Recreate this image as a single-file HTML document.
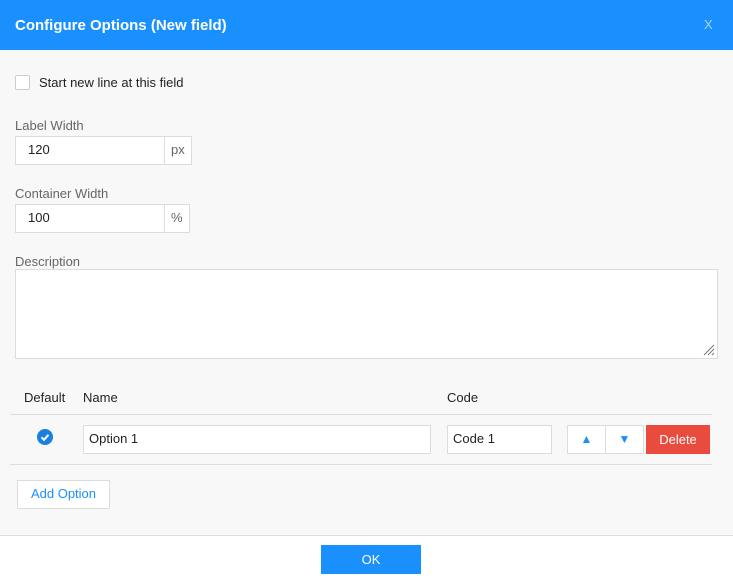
<!DOCTYPE html>
<html><head><style>
body{margin:0;width:733px;height:584px;background:#f8f8f8;font-family:"Liberation Sans",sans-serif;font-size:13px;color:#222;position:relative;overflow:hidden}
.a{position:absolute;box-sizing:border-box}
.hdr{left:0;top:0;width:733px;height:50px;background:#1a90ff;color:#fff}
.inp{background:#fff;border:1px solid #dcdcdc;line-height:26px;padding-left:12px;font-size:13px;color:#222}
.lbl{color:#666;font-size:13px}
</style></head><body>
<div class="a hdr"><div class="a" style="left:15px;top:17px;font-size:15px;font-weight:bold">Configure Options (New field)</div><div class="a" style="left:704px;top:17px;font-size:13px;color:#a8d3ff">X</div></div>
<div class="a" style="left:15px;top:75px;width:15px;height:15px;background:#fff;border:1px solid #ccc;border-radius:2px"></div>
<div class="a" style="left:39px;top:75px">Start new line at this field</div>
<div class="a lbl" style="left:15px;top:118px">Label Width</div>
<div class="a inp" style="left:15px;top:136px;width:150px;height:29px">120</div>
<div class="a inp" style="left:164px;top:136px;width:28px;height:29px;padding-left:6px;color:#666">px</div>
<div class="a lbl" style="left:15px;top:186px">Container Width</div>
<div class="a inp" style="left:15px;top:204px;width:150px;height:29px">100</div>
<div class="a inp" style="left:164px;top:204px;width:26px;height:29px;padding-left:6px;color:#666">%</div>
<div class="a lbl" style="left:15px;top:254px">Description</div>
<div class="a inp" style="left:15px;top:269px;width:703px;height:90px"></div>
<svg class="a" style="left:702px;top:343px" width="13" height="13"><path d="M12 2L2 12M12 6L6 12M12 10L10 12" stroke="#777" stroke-width="1"/></svg>
<div class="a" style="left:24px;top:390px">Default</div>
<div class="a" style="left:83px;top:390px">Name</div>
<div class="a" style="left:447px;top:390px">Code</div>
<div class="a" style="left:10px;top:414px;width:702px;height:1px;background:#ddd"></div>
<svg class="a" style="left:37px;top:429px" width="16" height="16"><circle cx="8" cy="8" r="8" fill="#1a7fe0"/><path d="M4.5 8.3L7 10.8L11.5 5.8" stroke="#fff" stroke-width="2" fill="none"/></svg>
<div class="a inp" style="left:83px;top:425px;width:348px;height:29px;padding-left:5px">Option 1</div>
<div class="a inp" style="left:447px;top:425px;width:105px;height:29px;padding-left:5px">Code 1</div>
<div class="a inp" style="left:567px;top:425px;width:39px;height:29px;padding:0;text-align:center;color:#1a90ff;font-size:12px">▲</div>
<div class="a inp" style="left:605px;top:425px;width:39px;height:29px;padding:0;text-align:center;color:#1a90ff;font-size:12px">▼</div>
<div class="a" style="left:646px;top:425px;width:64px;height:29px;background:#e94b3c;color:#fff;text-align:center;line-height:29px">Delete</div>
<div class="a" style="left:10px;top:464px;width:702px;height:1px;background:#ddd"></div>
<div class="a inp" style="left:17px;top:480px;width:93px;height:29px;padding:0;text-align:center;color:#1a90ff">Add Option</div>
<div class="a" style="left:0;top:535px;width:733px;height:49px;background:#fff;border-top:1px solid #ddd"></div>
<div class="a" style="left:321px;top:545px;width:100px;height:29px;background:#1a90ff;color:#fff;text-align:center;line-height:29px">OK</div>
</body></html>
